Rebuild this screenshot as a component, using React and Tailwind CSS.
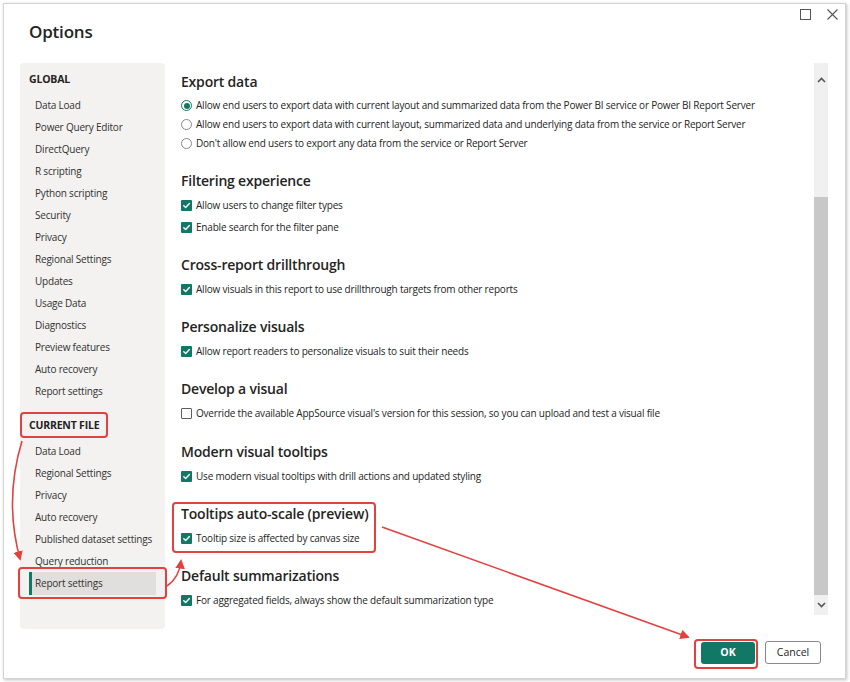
import React from 'react';

const globalItems = [
  'Data Load',
  'Power Query Editor',
  'DirectQuery',
  'R scripting',
  'Python scripting',
  'Security',
  'Privacy',
  'Regional Settings',
  'Updates',
  'Usage Data',
  'Diagnostics',
  'Preview features',
  'Auto recovery',
  'Report settings',
];

const fileItems = [
  'Data Load',
  'Regional Settings',
  'Privacy',
  'Auto recovery',
  'Published dataset settings',
  'Query reduction',
  'Report settings',
];

const sections = [
  {
    title: 'Filtering experience',
    items: [
      { label: 'Allow users to change filter types', checked: true },
      { label: 'Enable search for the filter pane', checked: true },
    ],
  },
  {
    title: 'Cross-report drillthrough',
    items: [{ label: 'Allow visuals in this report to use drillthrough targets from other reports', checked: true }],
  },
  {
    title: 'Personalize visuals',
    items: [{ label: 'Allow report readers to personalize visuals to suit their needs', checked: true }],
  },
  {
    title: 'Develop a visual',
    items: [
      {
        label: "Override the available AppSource visual's version for this session, so you can upload and test a visual file",
        checked: false,
      },
    ],
  },
  {
    title: 'Modern visual tooltips',
    items: [{ label: 'Use modern visual tooltips with drill actions and updated styling', checked: true }],
  },
  {
    title: 'Tooltips auto-scale (preview)',
    items: [{ label: 'Tooltip size is affected by canvas size', checked: true }],
  },
  {
    title: 'Default summarizations',
    items: [{ label: 'For aggregated fields, always show the default summarization type', checked: true }],
  },
];

function Radio({ checked }) {
  return checked ? (
    <span className="w-[11px] h-[11px] rounded-full border border-[#117865] flex items-center justify-center shrink-0">
      <span className="w-[6px] h-[6px] rounded-full bg-[#117865]" />
    </span>
  ) : (
    <span className="w-[11px] h-[11px] rounded-full border border-[#8a8886] shrink-0" />
  );
}

function Checkbox({ checked }) {
  if (!checked) return <span className="w-[11px] h-[11px] rounded-[1px] border border-[#605e5c] bg-white shrink-0" />;
  return (
    <span className="w-[11px] h-[11px] rounded-[1px] bg-[#117865] flex items-center justify-center shrink-0">
      <svg width="9" height="9" viewBox="0 0 10 10" fill="none">
        <path d="M2 5.2 L4.1 7.2 L8.2 2.8" stroke="white" strokeWidth="1.6" strokeLinecap="round" strokeLinejoin="round" />
      </svg>
    </span>
  );
}

function Annotations() {
  const red = '#e3403f';
  return (
    <svg className="absolute inset-0 pointer-events-none" width="850" height="682" viewBox="0 0 850 682">
      <defs>
        <marker id="ah" viewBox="0 0 10 10" refX="8" refY="5" markerWidth="6" markerHeight="6" orient="auto-start-reverse">
          <path d="M0 0 L10 5 L0 10 z" fill={red} />
        </marker>
      </defs>
      <rect x="21" y="413" width="86" height="24" rx="3" fill="none" stroke={red} strokeWidth="2" />
      <rect x="19" y="568" width="147" height="30" rx="3" fill="none" stroke={red} strokeWidth="2" />
      <rect x="173" y="503" width="202" height="49" rx="3" fill="none" stroke={red} strokeWidth="2" />
      <rect x="695" y="640" width="62" height="28" rx="3" fill="none" stroke={red} strokeWidth="2" />
      <path d="M22 441 Q 4 500 20 559" fill="none" stroke={red} strokeWidth="1.6" markerEnd="url(#ah)" />
      <path d="M167 586 Q 179 578 181 561" fill="none" stroke={red} strokeWidth="1.6" markerEnd="url(#ah)" />
      <path d="M382 527 L 688 637" fill="none" stroke={red} strokeWidth="1.6" markerEnd="url(#ah)" />
    </svg>
  );
}

export default function App() {
  return (
    <div className="relative w-[850px] h-[682px] bg-white p-[3px] pr-[4px] pb-[3px]" style={{ fontFamily: '"Open Sans", "Noto Sans", sans-serif' }}>
      <div className="w-full h-full border border-[#d4d4d4] shadow-[1px_1px_3px_rgba(0,0,0,0.25)] bg-white flex flex-col">
        {/* Title bar */}
        <div className="h-[59px] relative flex items-center pl-[25px] shrink-0">
          <h1 className="text-[17px] font-semibold text-[#252423] -mt-[3px] tracking-[-0.2px]">Options</h1>
          <div className="absolute right-[7px] top-[5px] flex items-center gap-[16px] text-[#555]">
            <svg width="11" height="11" viewBox="0 0 11 11"><rect x="0.5" y="0.5" width="10" height="10" fill="none" stroke="#555" strokeWidth="1" /></svg>
            <svg width="11" height="11" viewBox="0 0 11 11"><path d="M0.5 0.5 L10.5 10.5 M10.5 0.5 L0.5 10.5" stroke="#555" strokeWidth="1.1" /></svg>
          </div>
        </div>

        {/* Body */}
        <div className="flex h-[566px] shrink-0">
          <div className="ml-[16px] w-[145px] h-full bg-[#f3f2f1] rounded-[4px] pt-[6px] text-[#323130] text-[10px] tracking-[-0.2px]">
            <div className="h-[22px] flex items-center pl-[9px] font-bold text-[10.5px] text-[#252423]">GLOBAL</div>
            <div className="mt-[3px]">
              {globalItems.map((it) => (
                <div key={it} className="h-[22px] flex items-center mx-[9px] pl-[6px]">{it}</div>
              ))}
            </div>
            <div className="mt-[13px] h-[22px] flex items-center pl-[9px] font-bold text-[10.5px] text-[#252423]">CURRENT FILE</div>
            <div className="mt-[3px]">
              {fileItems.map((it, i) => {
                const sel = i === fileItems.length - 1;
                return (
                  <div
                    key={it}
                    className={sel ? 'h-[23px] flex items-center mx-[9px] pl-[3px] bg-[#e1dfdd] border-l-[3px] border-[#117865]' : 'h-[22px] flex items-center mx-[9px] pl-[6px]'}
                  >
                    {it}
                  </div>
                );
              })}
            </div>
          </div>

          <div className="flex-1 flex">
            <div className="flex-1 pl-[16px] pt-[7px] text-[10px] tracking-[-0.2px] text-[#252423]">
              <div className="mb-[16px]">
                <div className="h-[22px] flex items-center text-[14px] font-semibold">Export data</div>
                <div className="mt-[4px]">
                  {[
                    ['Allow end users to export data with current layout and summarized data from the Power BI service or Power BI Report Server', true],
                    ['Allow end users to export data with current layout, summarized data and underlying data from the service or Report Server', false],
                    ["Don't allow end users to export any data from the service or Report Server", false],
                  ].map(([label, c]) => (
                    <div key={label} className="h-[19px] flex items-center gap-[4px] whitespace-nowrap">
                      <Radio checked={c} />
                      <span>{label}</span>
                    </div>
                  ))}
                </div>
              </div>
              {sections.map((s) => (
                <div key={s.title} className="mb-[15.3px]">
                  <div className="h-[22px] flex items-center text-[14px] font-semibold">{s.title}</div>
                  <div className="mt-[3px]">
                    {s.items.map((it) => (
                      <div key={it.label} className="h-[22px] flex items-center gap-[4px] whitespace-nowrap">
                        <Checkbox checked={it.checked} />
                        <span>{it.label}</span>
                      </div>
                    ))}
                  </div>
                </div>
              ))}
            </div>
            {/* Scrollbar */}
            <div className="w-[14px] h-[552px] bg-[#f0f0f0] mr-[17px] flex flex-col items-center">
              <div className="h-[34px] flex items-center justify-center">
                <svg width="9" height="6" viewBox="0 0 9 6"><path d="M1 5 L4.5 1.5 L8 5" fill="none" stroke="#555" strokeWidth="1.6" /></svg>
              </div>
              <div className="flex-1 w-full flex flex-col justify-end">
                <div className="h-[398px] w-full bg-[#c8c8c8]" />
              </div>
              <div className="h-[20px] flex items-center justify-center">
                <svg width="9" height="6" viewBox="0 0 9 6"><path d="M1 1 L4.5 4.5 L8 1" fill="none" stroke="#555" strokeWidth="1.6" /></svg>
              </div>
            </div>
          </div>
        </div>

        {/* Footer */}
        <div className="flex-1 flex items-center justify-end gap-[10px] pr-[24px] pb-[2px]">
          <button className="w-[54px] h-[22px] bg-[#117865] text-white text-[10.5px] font-bold rounded-[3px]">OK</button>
          <button className="w-[56px] h-[23px] bg-white border border-[#8a8886] text-[#252423] text-[10.5px] rounded-[3px]">Cancel</button>
        </div>
      </div>
      <Annotations />
    </div>
  );
}
